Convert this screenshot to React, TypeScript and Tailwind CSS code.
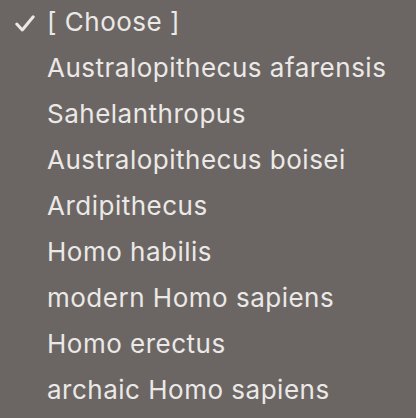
const items = [
  'Australopithecus afarensis',
  'Sahelanthropus',
  'Australopithecus boisei',
  'Ardipithecus',
  'Homo habilis',
  'modern Homo sapiens',
  'Homo erectus',
  'archaic Homo sapiens',
];

const Check = () => (
  <svg width="20" height="17" viewBox="0 0 20 17" fill="none" className="block">
    <path
      d="M1.8 9 L7.3 15 L18.2 1.8"
      stroke="currentColor"
      strokeWidth="3"
      strokeLinecap="round"
      strokeLinejoin="round"
    />
  </svg>
);

export default function App() {
  return (
    <div
      className="w-[416px] h-[418px] bg-[#6b6663] text-[#ebe9e7] text-[26px] tracking-[0.5px] leading-[46px] overflow-hidden"
      style={{ fontFamily: 'Inter, "Liberation Sans", sans-serif' }}
    >
      <ul className="flex flex-col -mt-[1px]">
        <li className="flex items-center h-[46px]">
          <span className="w-[47px] pl-[15px] flex items-center pt-[3px]">
            <Check />
          </span>
          <span>[ Choose ]</span>
        </li>
        {items.map((item) => (
          <li key={item} className="flex items-center h-[46px] pl-[47px]">
            {item}
          </li>
        ))}
      </ul>
    </div>
  );
}
